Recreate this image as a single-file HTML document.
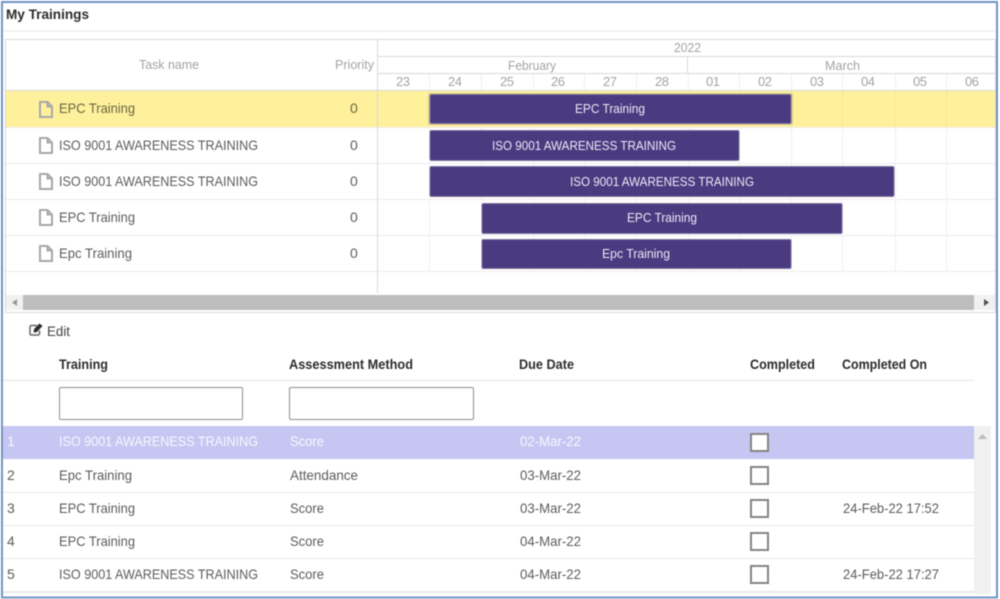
<!DOCTYPE html>
<html><head><meta charset="utf-8"><title>My Trainings</title>
<style>
html,body{margin:0;padding:0;background:#fff;width:1000px;height:599px;overflow:hidden}
svg{display:block;filter:blur(.4px)}
text{font-family:"Liberation Sans",sans-serif;font-size:14px}
.h{fill:#a3a3a3;font-size:13px}
.t{fill:#5c5c5c}
.b{fill:#2c2c2c;font-weight:bold;font-size:13.5px}
.w{fill:#ece9f6;font-size:13px}
.s{fill:#f8f8fd}
</style></head><body>
<svg width="1000" height="599" viewBox="0 0 1000 599" xmlns="http://www.w3.org/2000/svg">
<rect width="1000" height="599" fill="#fff"/>
<!-- panel header -->
<text x="6" y="19" textLength="83" lengthAdjust="spacingAndGlyphs" style="font-weight:bold;fill:#2c2c2c;font-size:14px">My Trainings</text>
<rect x="4" y="30" width="991" height="2" fill="#f2f2f2"/>
<!-- gantt frame -->
<rect x="5.5" y="39.500" width="990" height="273" fill="#fff" stroke="#d9d9d9"/>
<rect x="6" y="91" width="989" height="36" fill="#fff09c"/>
<g fill="#ececec">
<rect x="6" y="127" width="989" height="1"/>
<rect x="6" y="163" width="989" height="1"/><rect x="6" y="199" width="989" height="1"/>
<rect x="6" y="235" width="989" height="1"/><rect x="6" y="271" width="989" height="1"/>
</g>
<!-- header lines -->
<g fill="#d9d9d9">
<rect x="377" y="40" width="1" height="253"/>
<rect x="378" y="56" width="617" height="1"/>
<rect x="378" y="73" width="617" height="1"/>
<rect x="6" y="90" width="989" height="1"/>
<rect x="687" y="57" width="1" height="16"/>
</g>
<g fill="#efefef">
<rect x="429" y="74" width="1" height="16"/><rect x="481" y="74" width="1" height="16"/><rect x="533" y="74" width="1" height="16"/><rect x="584" y="74" width="1" height="16"/><rect x="636" y="74" width="1" height="16"/><rect x="688" y="74" width="1" height="16"/><rect x="739" y="74" width="1" height="16"/><rect x="791" y="74" width="1" height="16"/><rect x="842" y="74" width="1" height="16"/><rect x="895" y="74" width="1" height="16"/><rect x="946" y="74" width="1" height="16"/>
<rect x="429" y="128" width="1" height="144"/><rect x="481" y="128" width="1" height="144"/><rect x="533" y="128" width="1" height="144"/><rect x="584" y="128" width="1" height="144"/><rect x="636" y="128" width="1" height="144"/><rect x="688" y="128" width="1" height="144"/><rect x="739" y="128" width="1" height="144"/><rect x="791" y="128" width="1" height="144"/><rect x="842" y="128" width="1" height="144"/><rect x="895" y="128" width="1" height="144"/><rect x="946" y="128" width="1" height="144"/>
</g>
<g fill="#fbe994">
<rect x="429" y="91" width="1" height="36"/><rect x="791" y="91" width="1" height="36"/><rect x="842" y="91" width="1" height="36"/><rect x="895" y="91" width="1" height="36"/><rect x="946" y="91" width="1" height="36"/>
</g>
<!-- header text -->
<text class="h" x="139" y="69" textLength="60" lengthAdjust="spacingAndGlyphs">Task name</text>
<text class="h" x="335" y="69" textLength="39" lengthAdjust="spacingAndGlyphs">Priority</text>
<text class="h" x="674" y="52" textLength="27" lengthAdjust="spacingAndGlyphs">2022</text>
<text class="h" x="508" y="70" textLength="48" lengthAdjust="spacingAndGlyphs">February</text>
<text class="h" x="825" y="70" textLength="35" lengthAdjust="spacingAndGlyphs">March</text>
<text class="h" x="396" y="86" textLength="14">23</text>
<text class="h" x="448" y="86" textLength="14">24</text>
<text class="h" x="500" y="86" textLength="14">25</text>
<text class="h" x="551" y="86" textLength="14">26</text>
<text class="h" x="603" y="86" textLength="14">27</text>
<text class="h" x="655" y="86" textLength="14">28</text>
<text class="h" x="706" y="86" textLength="14">01</text>
<text class="h" x="758" y="86" textLength="14">02</text>
<text class="h" x="810" y="86" textLength="14">03</text>
<text class="h" x="861" y="86" textLength="14">04</text>
<text class="h" x="913" y="86" textLength="14">05</text>
<text class="h" x="965" y="86" textLength="14">06</text>
<!-- task rows -->
<defs>
<g id="doc"><path d="M1 1H8.500L13 5.500V16H1Z M8.500 1V5.500H13" fill="none" stroke="#a8a8a8" stroke-width="2"/></g>
</defs>
<use href="#doc" x="39" y="101"/>
<use href="#doc" x="39" y="137"/>
<use href="#doc" x="39" y="173"/>
<use href="#doc" x="39" y="209"/>
<use href="#doc" x="39" y="245"/>
<text class="t" x="59" y="113" textLength="76" lengthAdjust="spacingAndGlyphs" style="fill:#6b6640">EPC Training</text>
<text class="t" x="59" y="150" textLength="199" lengthAdjust="spacingAndGlyphs">ISO 9001 AWARENESS TRAINING</text>
<text class="t" x="59" y="186" textLength="199" lengthAdjust="spacingAndGlyphs">ISO 9001 AWARENESS TRAINING</text>
<text class="t" x="59" y="222" textLength="76" lengthAdjust="spacingAndGlyphs">EPC Training</text>
<text class="t" x="59" y="258" textLength="73" lengthAdjust="spacingAndGlyphs">Epc Training</text>
<text class="t" x="350" y="113" style="fill:#6b6640">0</text>
<text class="t" x="350" y="150">0</text>
<text class="t" x="350" y="186">0</text>
<text class="t" x="350" y="222">0</text>
<text class="t" x="350" y="258">0</text>
<!-- bars -->
<rect x="428" y="93" width="365" height="32" rx="2" fill="#d8cf8c"/>
<g fill="#4a3a80" stroke="#7d739f" stroke-width="1">
<rect x="430" y="94.500" width="361" height="29" rx="1.500"/>
<rect x="430" y="130.500" width="309" height="30" rx="1.500"/>
<rect x="430" y="166.500" width="464" height="30" rx="1.500"/>
<rect x="482" y="203.500" width="360" height="30" rx="1.500"/>
<rect x="482" y="239.500" width="309" height="29" rx="1.500"/>
</g>
<text class="w" x="575" y="113" textLength="70" lengthAdjust="spacingAndGlyphs">EPC Training</text>
<text class="w" x="492" y="150" textLength="184" lengthAdjust="spacingAndGlyphs">ISO 9001 AWARENESS TRAINING</text>
<text class="w" x="570" y="186" textLength="184" lengthAdjust="spacingAndGlyphs">ISO 9001 AWARENESS TRAINING</text>
<text class="w" x="627" y="222" textLength="70" lengthAdjust="spacingAndGlyphs">EPC Training</text>
<text class="w" x="602" y="258" textLength="68" lengthAdjust="spacingAndGlyphs">Epc Training</text>
<!-- gantt scrollbar -->
<rect x="6" y="295" width="989" height="15" fill="#f1f1f1"/>
<rect x="23" y="295" width="951" height="15" fill="#bdbdbd"/>
<path d="M17 299v7l-5-3.500z" fill="#999"/>
<path d="M984 299v7l5-3.500z" fill="#505050"/>
<rect x="5" y="312" width="991" height="1" fill="#d9d9d9"/>
<!-- edit -->
<g fill="none" stroke="#666" stroke-width="1.500">
<path d="M37 325.500H31.500a1.500 1.500 0 0 0-1.500 1.500V333.500a1.500 1.500 0 0 0 1.500 1.500H38a1.500 1.500 0 0 0 1.500-1.500V330.500"/>
</g>
<path d="M34 329L39.500 323.500L42.500 326L37 332L33.500 332.500Z" fill="#2c2c2c"/>
<text x="47" y="336" textLength="23" lengthAdjust="spacingAndGlyphs" style="fill:#444;font-size:13.500px">Edit</text>
<!-- table header -->
<text class="b" x="59" y="369" textLength="49" lengthAdjust="spacingAndGlyphs">Training</text>
<text class="b" x="289" y="369" textLength="124" lengthAdjust="spacingAndGlyphs">Assessment Method</text>
<text class="b" x="519" y="369" textLength="55" lengthAdjust="spacingAndGlyphs">Due Date</text>
<text class="b" x="750" y="369" textLength="65" lengthAdjust="spacingAndGlyphs">Completed</text>
<text class="b" x="842" y="369" textLength="85" lengthAdjust="spacingAndGlyphs">Completed On</text>
<rect x="3" y="380" width="970" height="1" fill="#e4e4e4"/>
<!-- filters -->
<rect x="59.500" y="387.500" width="183" height="32" rx="1.500" fill="#fff" stroke="#8f8f8f"/>
<rect x="289.500" y="387.500" width="184" height="32" rx="1.500" fill="#fff" stroke="#8f8f8f"/>
<!-- table rows -->
<rect x="3" y="426" width="971" height="33" fill="#c6c6f3"/>
<g fill="#e8e8e8">
<rect x="3" y="492" width="971" height="1"/>
<rect x="3" y="525" width="971" height="1"/>
<rect x="3" y="558" width="971" height="1"/>
<rect x="3" y="591" width="971" height="2"/>
</g>
<rect x="974" y="426" width="17" height="168" fill="#f0f0f0"/>
<path d="M978 439l4.500-5l4.500 5z" fill="#bbb"/>
<text class="s" x="7" y="446">1</text>
<text class="s" x="59" y="446" textLength="199" lengthAdjust="spacingAndGlyphs">ISO 9001 AWARENESS TRAINING</text>
<text class="s" x="290" y="446" textLength="34" lengthAdjust="spacingAndGlyphs">Score</text>
<text class="s" x="520" y="446" textLength="61" lengthAdjust="spacingAndGlyphs">02-Mar-22</text>
<text class="t" x="7" y="480">2</text>
<text class="t" x="59" y="480" textLength="73" lengthAdjust="spacingAndGlyphs">Epc Training</text>
<text class="t" x="290" y="480" textLength="68" lengthAdjust="spacingAndGlyphs">Attendance</text>
<text class="t" x="520" y="480" textLength="61" lengthAdjust="spacingAndGlyphs">03-Mar-22</text>
<text class="t" x="7" y="513">3</text>
<text class="t" x="59" y="513" textLength="76" lengthAdjust="spacingAndGlyphs">EPC Training</text>
<text class="t" x="290" y="513" textLength="34" lengthAdjust="spacingAndGlyphs">Score</text>
<text class="t" x="520" y="513" textLength="61" lengthAdjust="spacingAndGlyphs">03-Mar-22</text>
<text class="t" x="843" y="513" textLength="96" lengthAdjust="spacingAndGlyphs">24-Feb-22 17:52</text>
<text class="t" x="7" y="546">4</text>
<text class="t" x="59" y="546" textLength="76" lengthAdjust="spacingAndGlyphs">EPC Training</text>
<text class="t" x="290" y="546" textLength="34" lengthAdjust="spacingAndGlyphs">Score</text>
<text class="t" x="520" y="546" textLength="61" lengthAdjust="spacingAndGlyphs">04-Mar-22</text>
<text class="t" x="7" y="579">5</text>
<text class="t" x="59" y="579" textLength="199" lengthAdjust="spacingAndGlyphs">ISO 9001 AWARENESS TRAINING</text>
<text class="t" x="290" y="579" textLength="34" lengthAdjust="spacingAndGlyphs">Score</text>
<text class="t" x="520" y="579" textLength="61" lengthAdjust="spacingAndGlyphs">04-Mar-22</text>
<text class="t" x="843" y="579" textLength="96" lengthAdjust="spacingAndGlyphs">24-Feb-22 17:27</text>
<!-- checkboxes -->
<g fill="#fff" stroke="#858585" stroke-width="2">
<rect x="751" y="434" width="17" height="17"/>
<rect x="751" y="467" width="17" height="17"/>
<rect x="751" y="500" width="17" height="17"/>
<rect x="751" y="533" width="17" height="17"/>
<rect x="751" y="566" width="17" height="17"/>
</g>
<!-- outer border -->
<rect x="2" y="2" width="995" height="595.500" fill="none" stroke="#6f95c5" stroke-width="2"/>
</svg>
</body></html>
